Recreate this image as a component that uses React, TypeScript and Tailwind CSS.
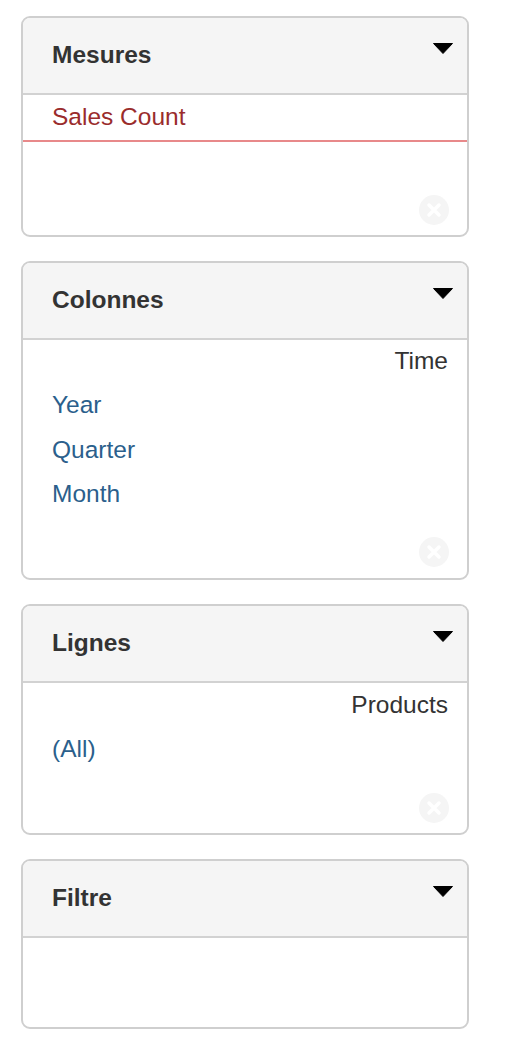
import React from 'react';

type Row = { label: string; kind: 'measure' | 'dim' | 'level' };

type Panel = {
  title: string;
  rows: { label: string; kind: Row['kind']; h: string }[];
  footer: string;
  clear: boolean;
  iconMb: string;
};

const panels: Panel[] = [
  {
    title: 'Mesures',
    rows: [{ label: 'Sales Count', kind: 'measure', h: 'h-[47px]' }],
    footer: 'h-[93px]',
    clear: true,
    iconMb: 'mb-[10px]',
  },
  {
    title: 'Colonnes',
    rows: [
      { label: 'Time', kind: 'dim', h: 'h-[43px]' },
      { label: 'Year', kind: 'level', h: 'h-[45px]' },
      { label: 'Quarter', kind: 'level', h: 'h-[44px]' },
      { label: 'Month', kind: 'level', h: 'h-[45px]' },
    ],
    footer: 'h-[61px]',
    clear: true,
    iconMb: 'mb-[11px]',
  },
  {
    title: 'Lignes',
    rows: [
      { label: 'Products', kind: 'dim', h: 'h-[44px]' },
      { label: '(All)', kind: 'level', h: 'h-[45px]' },
    ],
    footer: 'h-[61px]',
    clear: true,
    iconMb: 'mb-[10px]',
  },
  {
    title: 'Filtre',
    rows: [],
    footer: 'h-[89px]',
    clear: false,
    iconMb: '',
  },
];

const Caret = () => (
  <svg width="20" height="11" viewBox="0 0 20 11" className="block">
    <polygon points="0.5,0.5 19.5,0.5 10,10.5" fill="#000" stroke="#000" strokeLinejoin="round" />
  </svg>
);

const ClearIcon = () => (
  <svg width="30" height="30" viewBox="0 0 30 30" className="block">
    <circle cx="15" cy="15" r="15" fill="#f5f5f5" />
    <path d="M10 10 L20 20 M20 10 L10 20" stroke="#fff" strokeWidth="3.5" strokeLinecap="round" />
  </svg>
);

const PanelBox: React.FC<{ panel: Panel }> = ({ panel }) => (
  <div className="w-[448px] rounded-[9px] border-2 border-[#cfcfcf] bg-white overflow-hidden">
    <div className="flex h-[77px] justify-between border-b-2 border-[#d2d2d2] bg-[#f5f5f5] pl-[29px] pr-[14px]">
      <span className="self-center text-[24.5px] font-bold text-[#333]">{panel.title}</span>
      <div className="mt-[25px] self-start">
        <Caret />
      </div>
    </div>
    {panel.rows.map((row) => {
      if (row.kind === 'measure') {
        return (
          <div key={row.label} className={`${row.h} flex items-center border-b-2 border-[#e8898a] pl-[29px] text-[24.5px] text-[#9a2c2c]`}>
            {row.label}
          </div>
        );
      }
      if (row.kind === 'dim') {
        return (
          <div key={row.label} className={`${row.h} flex items-center justify-end pr-[19px] text-[24.5px] text-[#333]`}>
            {row.label}
          </div>
        );
      }
      return (
        <div key={row.label} className={`${row.h} flex items-center pl-[29px] text-[24.5px] text-[#2b5f8c]`}>
          {row.label}
        </div>
      );
    })}
    <div className={`${panel.footer} flex items-end justify-end pr-[18px]`}>
      {panel.clear && (
        <div className={panel.iconMb}>
          <ClearIcon />
        </div>
      )}
    </div>
  </div>
);

export default function App() {
  return (
    <div
      className="min-h-[1060px] bg-white pl-[21px] pt-[16px]"
      style={{ fontFamily: '"Liberation Sans", Arial, sans-serif' }}
    >
      <div className="flex flex-col gap-[24px]">
        {panels.map((p) => (
          <PanelBox key={p.title} panel={p} />
        ))}
      </div>
    </div>
  );
}
